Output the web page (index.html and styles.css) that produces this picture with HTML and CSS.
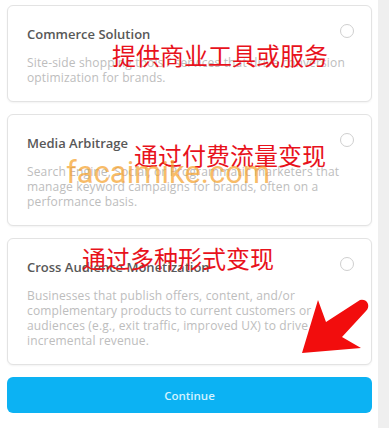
FILE: index.html
```html
<!DOCTYPE html>
<html lang="en">
<head>
<meta charset="utf-8">
<title>Business type</title>
<link rel="stylesheet" href="styles.css">
</head>
<body>
<main class="panel">
  <div class="card">
    <div class="card-body">
      <div class="card-title">Commerce Solution</div>
      <div class="card-desc">Site-side shopping tools / services that drive conversion optimization for brands.</div>
    </div>
    <span class="radio"></span>
  </div>
  <div class="card">
    <div class="card-body">
      <div class="card-title">Media Arbitrage</div>
      <div class="card-desc">Search Engine, Social, or Programmatic marketers that manage keyword campaigns for brands, often on a performance basis.</div>
    </div>
    <span class="radio"></span>
  </div>
  <div class="card">
    <div class="card-body">
      <div class="card-title">Cross Audience Monetization</div>
      <div class="card-desc">Businesses that publish offers, content, and/or complementary products to current customers or audiences (e.g., exit traffic, improved UX) to drive incremental revenue.</div>
    </div>
    <span class="radio"></span>
  </div>
  <button class="continue" type="button">Continue</button>
</main>

<div class="note note-1">提供商业工具或服务</div>
<div class="note note-2">通过付费流量变现</div>
<div class="note note-3">通过多种形式变现</div>
<div class="watermark">facaimike.com</div>
<svg class="arrow" width="389" height="428" viewBox="0 0 389 428" aria-hidden="true">
  <path d="M302 353 L318 300 L326 322 L360 300 Q366 299 368 304 Q369 308 366 311 L342 337 L361 348 Z" fill="#f20d0d"/>
</svg>
</body>
</html>
```

FILE: styles.css
```css
html, body {
  margin: 0;
  padding: 0;
}
body {
  width: 389px;
  height: 428px;
  overflow: hidden;
  background: #efefef;
  font-family: "Open Sans", "Noto Sans", Arial, sans-serif;
  position: relative;
}
.panel {
  width: 378px;
  height: 428px;
  box-sizing: border-box;
  background: #ffffff;
  padding: 5px 6px 0 7px;
  display: flex;
  flex-direction: column;
  gap: 12px;
}
.card {
  position: relative;
  border: 1px solid #e3e3e3;
  border-radius: 6px;
  box-shadow: 0 1px 2px rgba(0,0,0,0.05);
  padding: 18px 18px 16px 19px;
  background: #fff;
}
.card-title {
  font-size: 13px;
  line-height: 20px;
  font-weight: 600;
  color: #585858;
  margin-bottom: 11px;
}
.card-desc {
  font-size: 12px;
  line-height: 15px;
  letter-spacing: 0.15px;
  color: #bdbdbd;
}
.radio {
  position: absolute;
  top: 18px;
  right: 17px;
  width: 12px;
  height: 12px;
  border: 1px solid #cfcfcf;
  border-radius: 50%;
  background: #fff;
}
.continue {
  height: 36px;
  border: none;
  border-radius: 6px;
  background: #0cb2f3;
  color: #d3f3ff;
  font-family: "Open Sans", "Noto Sans", Arial, sans-serif;
  font-size: 11.5px;
  font-weight: 600;
  padding: 0;
}
.note {
  position: absolute;
  font-family: "Noto Sans CJK SC", "Noto Sans", sans-serif;
  font-size: 24px;
  line-height: 24px;
  color: #e8121c;
  white-space: nowrap;
}
.note-1 { left: 112px; top: 43px; }
.note-2 { left: 134px; top: 143px; }
.note-3 { left: 82px; top: 246px; }
.watermark {
  position: absolute;
  left: 66px;
  top: 155px;
  font-family: Roboto, "Noto Sans", sans-serif;
  font-size: 31px;
  line-height: 36px;
  color: rgba(246, 162, 45, 0.72);
  white-space: nowrap;
}
.arrow {
  position: absolute;
  left: 0;
  top: 0;
  pointer-events: none;
}
```
